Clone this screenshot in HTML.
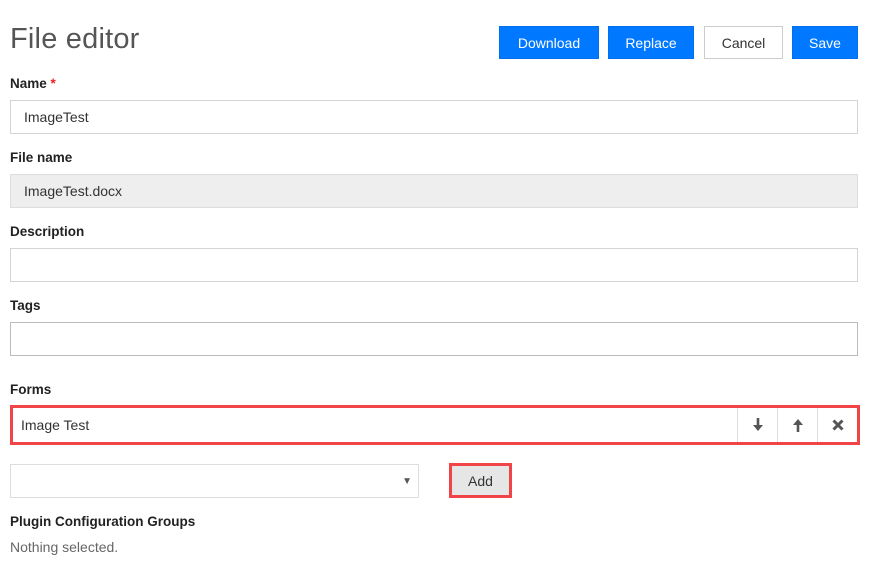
<!DOCTYPE html>
<html><head><meta charset="utf-8"><style>
*{box-sizing:border-box;margin:0;padding:0}
body{width:890px;height:571px;background:#fff;font-family:"Liberation Sans",sans-serif;color:#333;position:relative;overflow:hidden}
.a{position:absolute}
h1{position:absolute;left:10px;top:23px;font-size:29px;letter-spacing:0.2px;font-weight:normal;color:#555}
.btn{position:absolute;top:26px;height:33px;background:#0078ff;color:#fff;font-size:14px;display:flex;align-items:center;justify-content:center;border:1px solid #0070ee}
.lbl{position:absolute;left:10px;font-size:13.5px;font-weight:bold;color:#222}
.inp{position:absolute;left:10px;width:848px;height:34px;border:1px solid #d4d4d4;font-size:14px;padding-left:13px;display:flex;align-items:center;color:#333}
.cell{position:absolute;top:0;width:40px;height:34px;border-left:1px solid #ddd;display:flex;align-items:center;justify-content:center}
</style></head><body>
<h1>File editor</h1>
<div class="btn" style="left:499px;width:100px">Download</div>
<div class="btn" style="left:608px;width:86px">Replace</div>
<div class="btn" style="left:704px;width:79px;background:#fff;color:#333;border:1px solid #ccc">Cancel</div>
<div class="btn" style="left:792px;width:66px">Save</div>

<div class="lbl" style="top:76px">Name <span style="color:#e22">*</span></div>
<div class="inp" style="top:100px">ImageTest</div>
<div class="lbl" style="top:150px">File name</div>
<div class="inp" style="top:174px;background:#eee;border-color:#ddd">ImageTest.docx</div>
<div class="lbl" style="top:224px">Description</div>
<div class="inp" style="top:248px"></div>
<div class="lbl" style="top:298px">Tags</div>
<div class="inp" style="top:322px;border-color:#bbb"></div>
<div class="lbl" style="top:382px">Forms</div>
<div class="a" style="left:10px;top:405px;width:850px;height:40px;border:3px solid #f04448">
 <div class="a" style="left:8px;top:9px;font-size:14px">Image Test</div>
 <div class="cell" style="left:724px"><svg width="12" height="14" viewBox="0 0 12 14"><path d="M6 0V8" stroke="#555" stroke-width="2.6"/><path d="M1 7H11L6 13Z" fill="#555"/></svg></div>
 <div class="cell" style="left:764px"><svg width="12" height="14" viewBox="0 0 12 14"><path d="M6 14V6" stroke="#555" stroke-width="2.6"/><path d="M1 7H11L6 1Z" fill="#555"/></svg></div>
 <div class="cell" style="left:804px"><svg width="12" height="12" viewBox="0 0 12 12"><path d="M1.5 1.5L10.5 10.5M10.5 1.5L1.5 10.5" stroke="#555" stroke-width="3" fill="none"/></svg></div>
</div>
<div class="a" style="left:10px;top:464px;width:409px;height:34px;border:1px solid #ddd"><span class="a" style="right:6px;top:11px;font-size:10px;color:#555">▼</span></div>
<div class="a" style="left:449px;top:463px;width:63px;height:35px;border:3px solid #f04448;background:#e6e6e6;font-size:14px;display:flex;align-items:center;justify-content:center">Add</div>
<div class="lbl" style="top:514px">Plugin Configuration Groups</div>
<div class="a" style="left:10px;top:539px;font-size:14px;color:#666">Nothing selected.</div>
</body></html>
